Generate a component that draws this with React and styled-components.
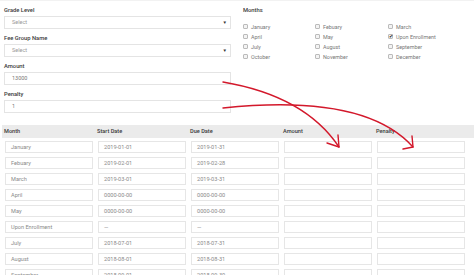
import React from 'react';
import styled, { createGlobalStyle } from 'styled-components';

const GlobalStyle = createGlobalStyle`
  html, body {
    margin: 0;
    padding: 0;
    background: #ffffff;
  }
  body {
    font-family: Roboto, "Liberation Sans", Arial, sans-serif;
    color: #333;
    width: 474px;
    height: 275px;
    overflow: hidden;
  }
`;

const Page = styled.div`
  position: relative;
  width: 474px;
  height: 275px;
  overflow: hidden;
  border-top: 1px solid #f2f2f2;
  box-sizing: border-box;
`;

const Top = styled.div`
  display: grid;
  grid-template-columns: 227px 1fr;
  column-gap: 12px;
  padding: 5px 0 0 4px;
`;

const Field = styled.div`
  display: flex;
  flex-direction: column;
  margin-bottom: 5.5px;
`;

const Label = styled.div`
  font-size: 5.8px;
  font-weight: 500;
  line-height: 8px;
  color: #3a3a3a;
  margin-bottom: 2px;
`;

const Box = styled.div`
  position: relative;
  height: 12.5px;
  box-sizing: border-box;
  border: 1px solid #e4e4e4;
  padding: 0 ${(p) => (p.$pad ? p.$pad : 6)}px;
  display: flex;
  align-items: center;
  font-size: 5.5px;
  color: ${(p) => (p.$muted ? '#999' : '#777')};
`;

const Caret = styled.span`
  position: absolute;
  right: 3px;
  top: 50%;
  transform: translateY(-50%);
  font-size: 4.5px;
  color: #333;
`;

const Months = styled.div`
  display: flex;
  flex-direction: column;
`;

const MonthGrid = styled.div`
  display: grid;
  grid-template-columns: 72px 73px 1fr;
  row-gap: 2.5px;
  margin-top: 7px;
`;

const Check = styled.label`
  display: flex;
  align-items: center;
  gap: 3px;
  height: 7.5px;
  font-size: 5.4px;
  color: #777;
`;

const Tick = styled.span`
  width: 5px;
  height: 5px;
  box-sizing: border-box;
  border: 0.7px solid #bbb;
  border-radius: 1px;
  background: #f3f3f3;
  display: inline-flex;
  align-items: center;
  justify-content: center;
  font-size: 5px;
  line-height: 1;
  color: #222;
`;

const Table = styled.div`
  margin-top: 6.5px;
`;

const HeadRow = styled.div`
  display: grid;
  grid-template-columns: repeat(5, 93px);
  align-items: center;
  height: 13px;
  margin-left: 2px;
  padding-left: 2px;
  background: #ebebeb;
  font-size: 5.6px;
  font-weight: 500;
  color: #3a3a3a;
`;

const Body = styled.div`
  display: flex;
  flex-direction: column;
  gap: 4px;
  padding: 3px 0 0 4px;
`;

const Row = styled.div`
  display: grid;
  grid-template-columns: repeat(5, 93px);
`;

const Cell = styled.div`
  margin-left: 1px;
  width: 88px;
  height: 12px;
  box-sizing: border-box;
  border: 1px solid #e6e6e6;
  padding: 0 5px;
  display: flex;
  align-items: center;
  font-size: 5.6px;
  color: #8a8a8a;
`;

const Arrows = styled.svg`
  position: absolute;
  left: 0;
  top: 0;
  pointer-events: none;
`;

const monthCols = [
  ['January', 'Febuary', 'March'],
  ['April', 'May', 'Upon Enrollment'],
  ['July', 'August', 'September'],
  ['October', 'November', 'December'],
];

const rows = [
  ['January', '2019-01-01', '2019-01-31'],
  ['Febuary', '2019-02-01', '2019-02-28'],
  ['March', '2019-03-01', '2019-03-31'],
  ['April', '0000-00-00', '0000-00-00'],
  ['May', '0000-00-00', '0000-00-00'],
  ['Upon Enrollment', '—', '—'],
  ['July', '2018-07-01', '2018-07-31'],
  ['August', '2018-08-01', '2018-08-31'],
  ['September', '2018-09-01', '2018-09-30'],
];

export default function App() {
  return (
    <>
      <GlobalStyle />
      <Page>
        <Top>
          <div>
            <Field>
              <Label>Grade Level</Label>
              <Box $muted $pad={7}>
                Select
                <Caret>▼</Caret>
              </Box>
            </Field>
            <Field>
              <Label>Fee Group Name</Label>
              <Box $muted $pad={7}>
                Select
                <Caret>▼</Caret>
              </Box>
            </Field>
            <Field>
              <Label>Amount</Label>
              <Box $pad={7}>13000</Box>
            </Field>
            <Field>
              <Label>Penalty</Label>
              <Box $pad={7}>1</Box>
            </Field>
          </div>
          <Months>
            <Label>Months</Label>
            <MonthGrid>
              {monthCols.flat().map((m) => (
                <Check key={m}>
                  <Tick>{m === 'Upon Enrollment' ? '✔' : ''}</Tick>
                  {m}
                </Check>
              ))}
            </MonthGrid>
          </Months>
        </Top>

        <Table>
          <HeadRow>
            <span>Month</span>
            <span>Start Date</span>
            <span>Due Date</span>
            <span>Amount</span>
            <span>Penalty</span>
          </HeadRow>
          <Body>
            {rows.map((r) => (
              <Row key={r[0]}>
                <Cell>{r[0]}</Cell>
                <Cell>{r[1]}</Cell>
                <Cell>{r[2]}</Cell>
                <Cell />
                <Cell />
              </Row>
            ))}
          </Body>
        </Table>

        <Arrows width="474" height="275" viewBox="0 0 474 275">
          <g
            fill="none"
            stroke="#d3182b"
            strokeWidth="1.4"
            strokeLinecap="round"
            strokeLinejoin="round"
          >
            <path d="M223 81 Q305 95 339 146" />
            <path d="M338 134 L339 146 L327 142" />
            <path d="M223 107 C280 101 370 98 413 146" />
            <path d="M412 135 L413 146 L403 148" />
          </g>
        </Arrows>
      </Page>
    </>
  );
}
